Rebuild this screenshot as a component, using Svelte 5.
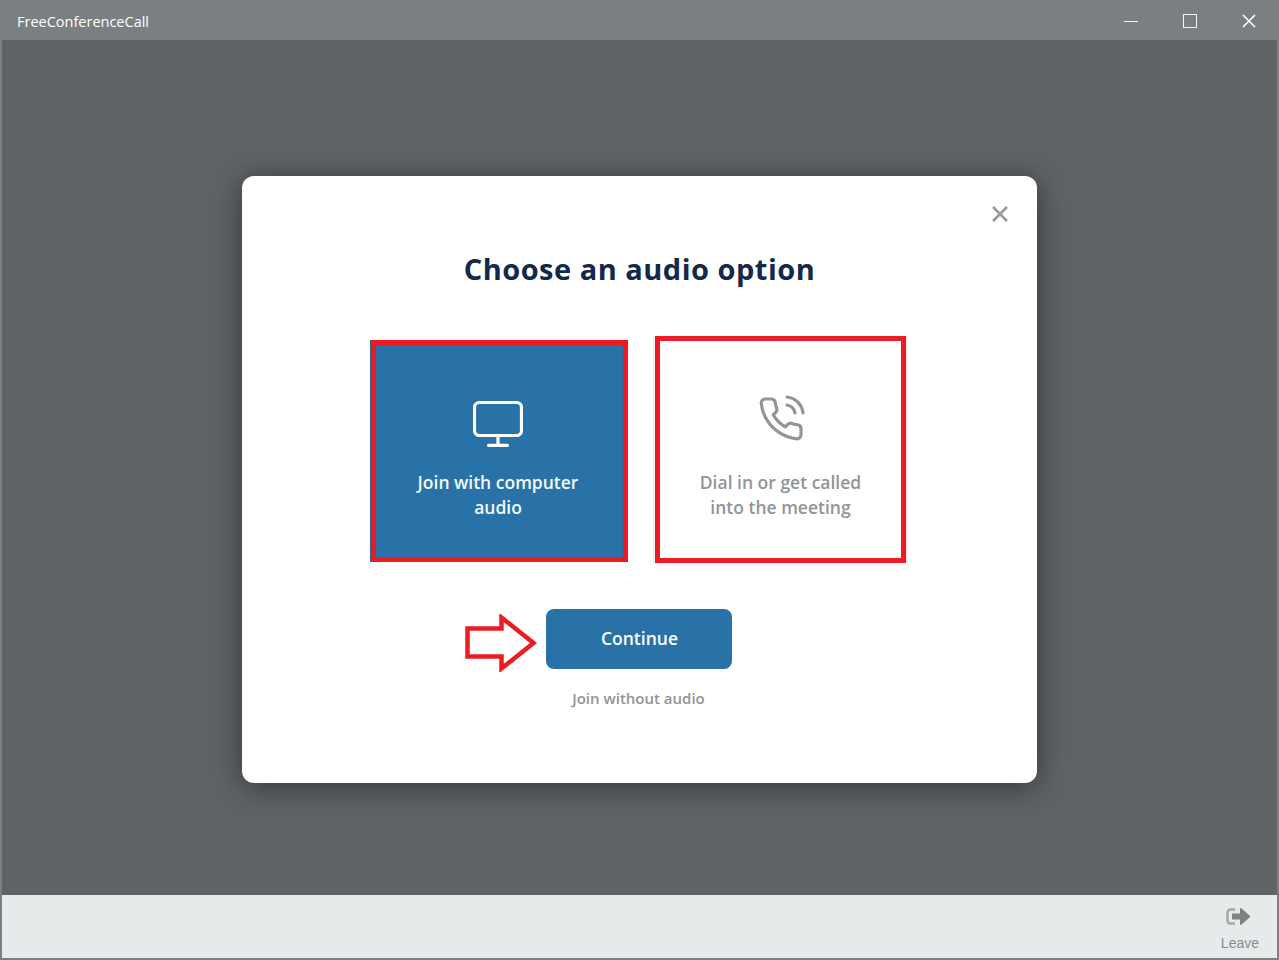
<script lang="ts">
  let selected = $state("computer");
</script>

<div class="window">
  <header class="titlebar">
    <span class="app-name">FreeConferenceCall</span>
    <div class="controls">
      <button class="ctl" aria-label="Minimize">
        <svg width="14" height="14" viewBox="0 0 14 14"><path d="M0 7.500h14" /></svg>
      </button>
      <button class="ctl" aria-label="Maximize">
        <svg width="14" height="14" viewBox="0 0 14 14"><rect x=".5" y=".5" width="13" height="13" /></svg>
      </button>
      <button class="ctl close" aria-label="Close">
        <svg width="14" height="14" viewBox="0 0 14 14"><path d="M1 1l12 12M13 1L1 13" /></svg>
      </button>
    </div>
  </header>

  <div class="frame">
    <main class="stage">
      <section class="modal">
        <button class="dismiss" aria-label="Close dialog">
          <svg width="18" height="18" viewBox="0 0 18 18"><path d="M2 2l14 14M16 2L2 16" /></svg>
        </button>

        <h1>Choose an audio option</h1>

        <div class="options">
          <button class="option computer" class:active={selected === "computer"} onclick={() => (selected = "computer")}>
            <svg class="icon" width="50" height="46" viewBox="0 0 50 46">
              <rect x="1.500" y="1.500" width="47" height="33" rx="5" />
              <path d="M25 35v9M15.500 44.300h19" />
            </svg>
            <span>Join with computer<br />audio</span>
          </button>
          <button class="option dial" class:active={selected === "dial"} onclick={() => (selected = "dial")}>
            <svg class="icon" width="48" height="48" viewBox="0 0 24 24">
              <path d="M15.050 5A5 5 0 0 1 19 8.950M15.050 1A9 9 0 0 1 23 8.940m-1 7.980v3a2 2 0 0 1-2.180 2 19.790 19.790 0 0 1-8.630-3.070 19.500 19.500 0 0 1-6-6 19.790 19.790 0 0 1-3.070-8.670A2 2 0 0 1 4.110 2h3a2 2 0 0 1 2 1.720 12.840 12.840 0 0 0 .7 2.810 2 2 0 0 1-.45 2.110L8.090 9.910a16 16 0 0 0 6 6l1.270-1.270a2 2 0 0 1 2.110-.45 12.840 12.840 0 0 0 2.810.7A2 2 0 0 1 22 16.920z" />
            </svg>
            <span>Dial in or get called<br />into the meeting</span>
          </button>
        </div>

        <button class="continue">Continue</button>
        <button class="skip">Join without audio</button>

        <!-- annotation drawn over the dialog -->
        <svg class="pointer" width="76" height="58" viewBox="0 0 76 58">
          <path d="M2.500 14.500h34v-11l32 25.500-32 25.500v-12h-34z" />
        </svg>
      </section>
    </main>

    <footer class="bottom">
      <button class="leave">
        <svg width="26" height="19" viewBox="0 0 26 19">
          <path class="door" d="M10 2.500H5.500a3 3 0 0 0-3 3v8a3 3 0 0 0 3 3H10" />
          <path class="arrow" d="M7 6.500h8V1.800a.8.800 0 0 1 1.300-.6l8.500 7.500a1 1 0 0 1 0 1.500l-8.500 7.500a.8.800 0 0 1-1.300-.6v-4.600H7z" />
        </svg>
        <span>Leave</span>
      </button>
    </footer>
  </div>
</div>

<style>
  :global(body) {
    background: #7a7f82;
  }

  button {
    border: 0;
    background: none;
    padding: 0;
    cursor: pointer;
    font: inherit;
  }

  .window {
    display: flex;
    flex-direction: column;
    height: 960px;
    font-family: "Open Sans", sans-serif;
  }

  .titlebar {
    flex: none;
    height: 40px;
    display: flex;
    align-items: center;
    justify-content: space-between;
    background: #7a7f82;
    color: #fff;
    padding-left: 17px;
  }

  .app-name {
    font-size: 14.5px;
    position: relative;
    top: 1px;
  }

  .controls {
    display: flex;
    align-items: center;
    gap: 45px;
    padding-right: 23px;
    margin-top: 2px;
  }

  .ctl {
    display: flex;
  }

  .ctl svg {
    fill: none;
    stroke: #f4f5f5;
    stroke-width: 1;
  }

  .ctl.close svg {
    stroke: #fff;
    stroke-width: 1.6;
  }

  .frame {
    flex: 1;
    display: flex;
    flex-direction: column;
    min-height: 0;
    border: 2px solid #7a7f82;
    border-top: 0;
  }

  .stage {
    flex: 1;
    display: flex;
    justify-content: center;
    padding-top: 136px;
    background: #5f6366;
  }

  .modal {
    position: relative;
    box-sizing: border-box;
    width: 795px;
    height: 607px;
    background: #fff;
    border-radius: 12px;
    box-shadow: 0 4px 30px rgba(0, 0, 0, 0.45);
    display: flex;
    flex-direction: column;
    align-items: center;
    padding-top: 72px;
  }

  .dismiss {
    position: absolute;
    top: 29px;
    right: 28px;
    display: flex;
  }

  .dismiss svg {
    fill: none;
    stroke: #97999c;
    stroke-width: 2.6;
  }

  h1 {
    margin: 0;
    font-size: 29px;
    line-height: 42px;
    font-weight: 700;
    color: #12284c;
    letter-spacing: 0.5px;
  }

  .options {
    display: flex;
    align-items: flex-start;
    gap: 27px;
    margin-top: 46px;
    margin-right: 2px;
  }

  .option {
    box-sizing: border-box;
    display: flex;
    flex-direction: column;
    align-items: center;
    border: 5px solid #ed1c24;
    font-size: 17.5px;
    font-weight: 600;
    line-height: 25px;
    text-align: center;
  }

  .computer {
    width: 257px;
    height: 222px;
    margin-top: 4px;
    padding: 56px 3px 0 0;
    background: #2872a8;
    color: #f4f8fb;
    box-shadow: -1px 0 0 #2a5f88;
  }

  .computer .icon {
    margin-bottom: 23px;
    fill: none;
    stroke: #fff;
    stroke-width: 3.2;
    stroke-linecap: round;
  }

  .dial {
    width: 251px;
    height: 227px;
    padding-top: 54px;
    background: #fff;
    color: #929496;
    box-shadow: -2px 0 0 #eceeef, 2px 0 0 #eceeef;
  }

  .dial .icon {
    margin: 0 0 27px 1px;
    fill: none;
    stroke: #929496;
    stroke-width: 1.6;
    stroke-linecap: round;
    stroke-linejoin: round;
  }

  .continue {
    width: 186px;
    height: 60px;
    margin: 46px 0 0 0;
    padding: 0 0 2px 1px;
    margin-right: 1px;
    border-radius: 8px;
    background: #2872a8;
    color: #fff;
    font-size: 17.5px;
    font-weight: 600;
  }

  .skip {
    margin-top: 18px;
    margin-left: -2px;
    font-size: 15px;
    line-height: 22px;
    font-weight: 600;
    color: #929496;
  }

  .pointer {
    position: absolute;
    left: 223px;
    top: 438px;
    fill: #fff;
    stroke: #ed1c24;
    stroke-width: 4.5;
  }

  .bottom {
    flex: none;
    height: 63px;
    display: flex;
    justify-content: flex-end;
    background: #e6eaeb;
  }

  .leave {
    display: flex;
    flex-direction: column;
    align-items: center;
    padding: 12px 18px 0 0;
    font-family: "Liberation Sans", Arial, sans-serif;
    font-size: 14px;
    color: #888b8e;
  }

  .leave svg {
    margin-right: 4px;
  }

  .leave span {
    margin-top: 9px;
    line-height: 16px;
  }

  .door {
    fill: none;
    stroke: #a5a7a9;
    stroke-width: 2.5;
  }

  .arrow {
    fill: #7f8183;
  }
</style>
